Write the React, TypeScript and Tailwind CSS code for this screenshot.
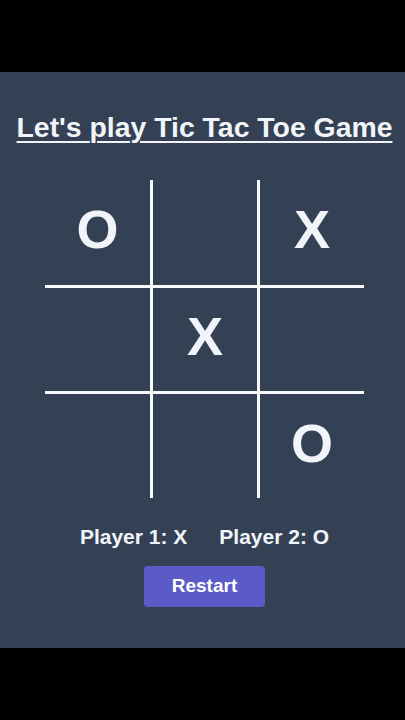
import { useState } from "react";

type Mark = "X" | "O" | "";

const start: Mark[] = ["O", "", "X", "", "X", "", "", "", "O"];

const App = () => {
    const [board, setBoard] = useState<Mark[]>(start);

    const cellBorder = (i: number) => {
        const right = i % 3 !== 2 ? "border-r-[3px]" : "";
        const bottom = i < 6 ? "border-b-[3px]" : "";
        return `${right} ${bottom}`;
    };

    return (
        <div className="min-h-[720px] bg-black py-[72px] font-['Liberation_Sans',Arial,sans-serif]">
            <div className="h-[576px] bg-[#344155] flex flex-col items-center pt-[39px] pl-1">
                <h1 className="text-[28.4px] leading-[32px] font-bold text-[#f1f5f9] underline underline-offset-[4px] decoration-[2px]">
                    Let's play Tic Tac Toe Game
                </h1>

                {/* board lines come from the cell borders */}
                <div className="grid grid-cols-[108px_107px_104px] grid-rows-[108px_106px_104px] mt-[37px]">
                    {board.map((mark, i) => (
                        <div
                            key={i}
                            className={`border-[#f8fafc] flex items-center justify-center pb-[7px] text-[54px] leading-none font-bold text-[#f1f5f9] ${cellBorder(i)}`}
                        >
                            {mark}
                        </div>
                    ))}
                </div>

                <div className="flex gap-8 mt-[27px] text-[21px] leading-[24px] font-bold text-[#f1f5f9]">
                    <span>Player 1: X</span>
                    <span>Player 2: O</span>
                </div>

                <button
                    type="button"
                    onClick={() => setBoard(Array(9).fill(""))}
                    className="mt-[17px] w-[121px] h-[41px] rounded-[4px] bg-[#5b5bc8] text-white text-[19px] font-bold"
                >
                    Restart
                </button>
            </div>
        </div>
    );
};

export default App;
